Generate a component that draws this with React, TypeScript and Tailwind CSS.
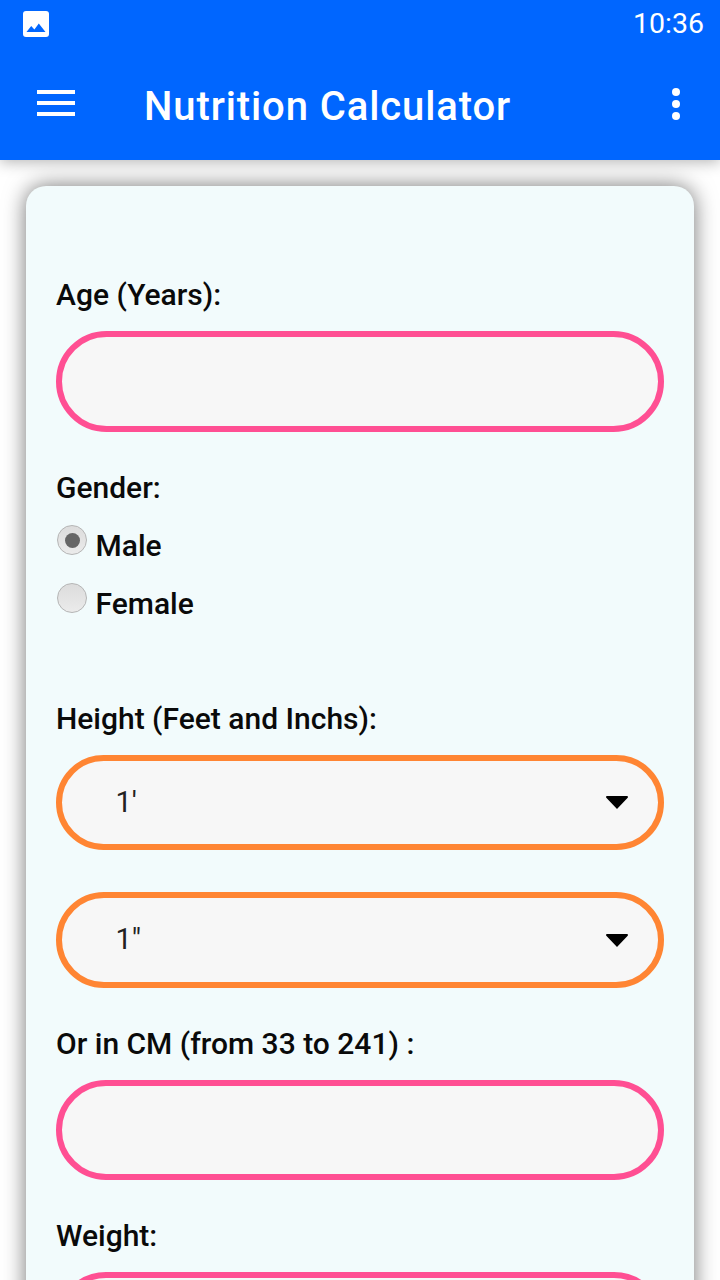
function TextField({ className }: { className: string }) {
  return (
    <div className={`w-full rounded-full border-[6px] border-[#ff4f93] bg-[#f7f7f7] ${className}`} />
  );
}

function SelectField({ value, className }: { value: string; className: string }) {
  return (
    <div className={`flex w-full items-center justify-between rounded-full border-[6px] border-[#ff8533] bg-[#f7f7f7] pl-[53.5px] pr-[30px] ${className}`}>
      <span className="text-[29px] text-[#222222]">{value}</span>
      <svg width="22" height="13" viewBox="0 0 22 13">
        <path d="M1 0h20a1 1 0 0 1 .7 1.7L11 13 .3 1.7A1 1 0 0 1 1 0z" fill="#000000" />
      </svg>
    </div>
  );
}

function Radio({ checked, label, className }: { checked?: boolean; label: string; className: string }) {
  return (
    <div className={`flex items-start ${className}`}>
      <div className="ml-px flex h-[30px] w-[30px] items-center justify-center rounded-full border border-[#b5b5b5] bg-gradient-to-b from-[#dcdcdc] to-[#ebebeb]">
        {checked && <div className="h-[15px] w-[15px] rounded-full bg-[#666666]" />}
      </div>
      <span className="mt-1 ml-[8.5px] text-[30px] leading-[34px] font-medium text-[#0a0a0a]">{label}</span>
    </div>
  );
}

export default function App() {
  return (
    <div className="flex h-[1280px] w-[720px] flex-col overflow-hidden bg-white font-['Roboto',sans-serif]">
      <header className="relative z-10 h-[160px] shrink-0 bg-[#0066ff] text-white shadow-[0_2px_14px_rgba(0,0,0,0.3)]">
        <div className="flex h-[48px] items-center justify-between pr-4 pl-[23px]">
          <svg width="26" height="26" viewBox="0 0 26 26">
            <rect width="26" height="26" rx="3" fill="#ffffff" />
            <path d="M3.5 21l4.7-6 3.2 3.6 4.4-6.1 6.7 8.5z" fill="#0066ff" />
          </svg>
          <span className="mt-px text-[28.5px] leading-none">10:36</span>
        </div>
        <div className="flex h-[112px] items-center pr-[40px] pl-[37px]">
          <div className="mb-0.5 flex w-[38px] flex-col gap-[7px]">
            <div className="h-1 bg-white" />
            <div className="h-1 bg-white" />
            <div className="h-1 bg-white" />
          </div>
          <h1 className="mt-1.5 ml-[69px] flex-1 text-[40px] leading-none font-medium tracking-[0.9px]">Nutrition Calculator</h1>
          <div className="flex flex-col gap-[4px]">
            <div className="h-2 w-2 rounded-full bg-white" />
            <div className="h-2 w-2 rounded-full bg-white" />
            <div className="h-2 w-2 rounded-full bg-white" />
          </div>
        </div>
      </header>

      <main className="mx-[26px] mt-[26px] flex-1 rounded-t-[20px] bg-[#f2fbfc] px-[30px] pt-[92px] shadow-[0_0_22px_rgba(0,0,0,0.55)]">
        <p className="text-[30px] leading-[34px] font-medium text-[#0a0a0a]">Age (Years):</p>
        <TextField className="mt-[19px] h-[101px]" />

        <p className="mt-[39px] text-[30px] leading-[34px] font-medium text-[#0a0a0a]">Gender:</p>
        <Radio checked label="Male" className="mt-[20px]" />
        <Radio label="Female" className="mt-[20px]" />

        <p className="mt-[81px] text-[30px] leading-[34px] font-medium text-[#0a0a0a]">Height (Feet and Inchs):</p>
        <SelectField value="1'" className="mt-[19px] h-[95px]" />
        <SelectField value={'1"'} className="mt-[42px] h-[96px]" />

        <p className="mt-[39px] text-[30px] leading-[34px] font-medium text-[#0a0a0a]">Or in CM (from 33 to 241) :</p>
        <TextField className="mt-[19px] h-[100px]" />

        <p className="mt-[39px] text-[30px] leading-[34px] font-medium text-[#0a0a0a]">Weight:</p>
        <TextField className="mt-[19px] h-[100px]" />
      </main>
    </div>
  );
}
